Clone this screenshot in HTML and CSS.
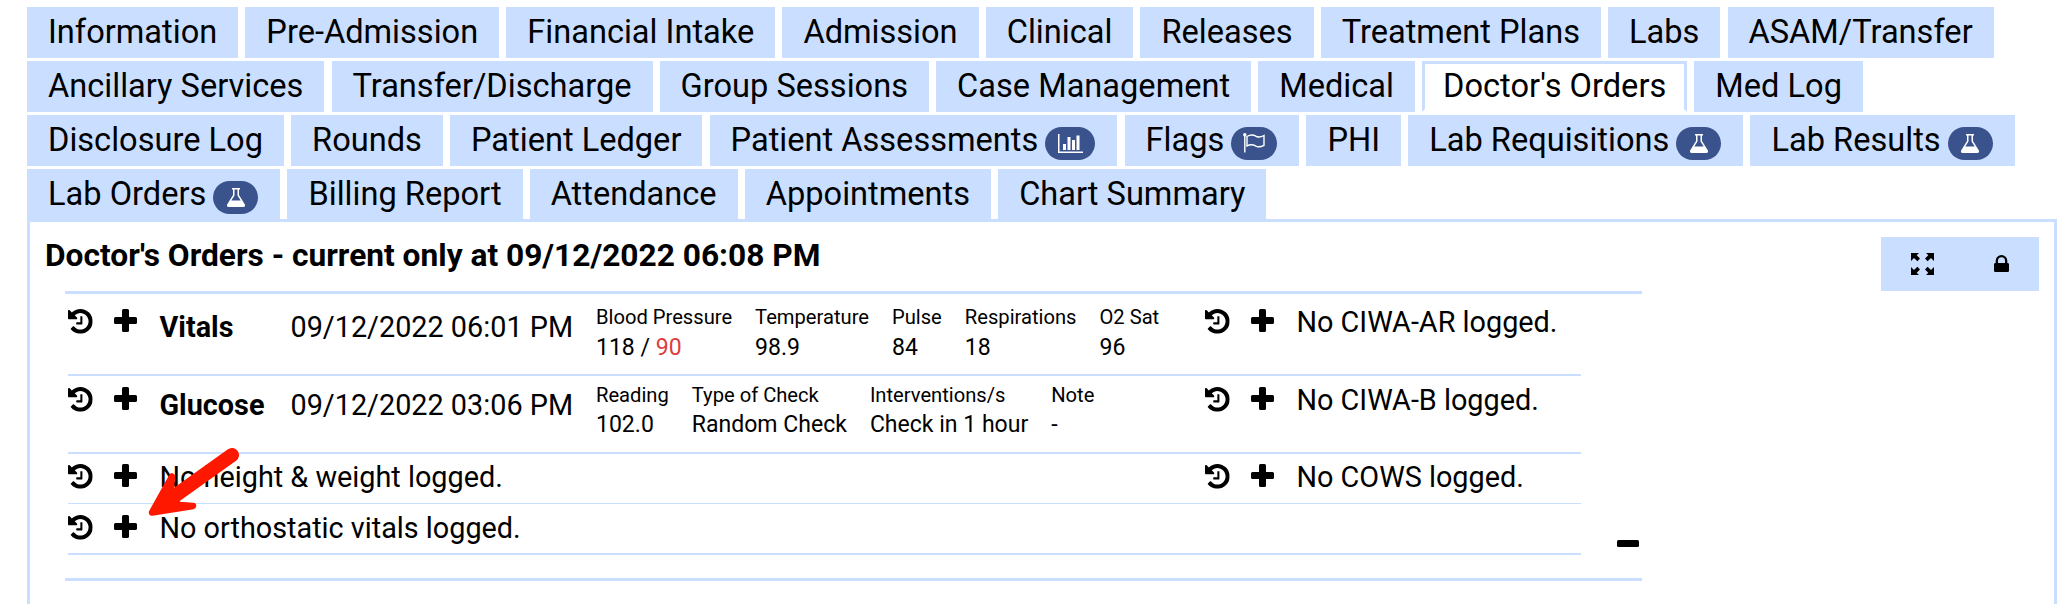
FILE: index.html
```html
<!DOCTYPE html>
<html lang="en">
<head>
<meta charset="utf-8">
<title>Doctor's Orders</title>
<link rel="stylesheet" href="styles.css">
</head>
<body>
<svg class="sprite" aria-hidden="true">
  <symbol id="history" viewBox="0 128 1536 1536"><path d="M1536 896q0 156-61 298t-164 245-245 164-298 61q-172 0-327-72.5t-264-204.5q-7-10-6.5-22.5t8.5-20.5l137-138q10-9 25-9 16 2 23 12 73 95 179 147t225 52q104 0 198.5-40.5t163.5-109.5 109.5-163.5 40.5-198.5-40.5-198.5-109.5-163.5-163.5-109.5-198.5-40.5q-98 0-188 35.5t-160 101.5l137 138q31 30 14 69-17 40-59 40h-448q-26 0-45-19t-19-45v-448q0-42 40-59 39-17 69 14l130 129q107-101 244.5-156.5t284.5-55.5q156 0 298 61t245 164 164 245 61 298zm-640-288v448q0 14-9 23t-23 9h-320q-14 0-23-9t-9-23v-64q0-14 9-23t23-9h224v-352q0-14 9-23t23-9h64q14 0 23 9t9 23z"/></symbol>
  <symbol id="plus" viewBox="0 0 23 23"><path d="M9.500 0h4q1.500 0 1.500 1.500V8h6.500Q23 8 23 9.500v4q0 1.500-1.500 1.500H15v6.500q0 1.500-1.500 1.500h-4Q8 23 8 21.500V15H1.500Q0 15 0 13.500v-4Q0 8 1.500 8H8V1.500Q8 0 9.500 0z"/></symbol>
  <symbol id="flask" viewBox="0 0 18 19"><path fill-rule="evenodd" d="M5 0h8v1.500h-1v5.500l5.600 9q1.400 3-1.400 3H1.800Q-1 19 .4 16L6 7V1.500H5zM7.500 1.500V7.400L4.300 12.500h9.400L10.500 7.400V1.500z"/></symbol>
  <symbol id="chart" viewBox="0 0 25 19"><path d="M0 0h1.500v17.500H25V19H0zM5 10h3v6H5zM9.500 3h3v13h-3zM14 6h3v10h-3zM18.500 1.500h3V16h-3z"/></symbol>
  <symbol id="flag" viewBox="0 0 22 20"><path d="M1.800 1v18.500M4 3.500c5-3 7.500-1 9.500 0 2.500 1 5 .3 7.500-1v9.800c-2.500 1.300-5 2-7.500 1-2-1-5-3-9.500-.3z" fill="none" stroke="currentColor" stroke-width="1.400"/><circle cx="1.800" cy="1.800" r="1.700"/></symbol>
  <symbol id="expand" viewBox="0 0 23 22"><path d="M0 0h8L5.700 2.300 9 5.600 6.400 8.300 3 5 0 8z"/><path d="M23 0h-8l2.300 2.300L14 5.600l2.600 2.700L20 5l3 3zM0 22h8l-2.300-2.300L9 16.400l-2.600-2.700L3 17l-3-3zM23 22h-8l2.300-2.300L14 16.400l2.600-2.700L20 17l3-3z"/></symbol>
  <symbol id="lock" viewBox="0 0 15 17"><path fill-rule="evenodd" d="M1.700 8V5.700a5.800 5.700 0 0 1 11.600 0V8Q15 8 15 9.200v6.500q0 1.300-1.300 1.300H1.300Q0 17 0 15.700V9.200Q0 8 1.700 8zM4 8h7V5.700a3.500 3.500 0 0 0-7 0z"/></symbol>
</svg>

<nav class="tabs">
  <a class="tab">Information</a>
  <a class="tab">Pre-Admission</a>
  <a class="tab">Financial Intake</a>
  <a class="tab">Admission</a>
  <a class="tab">Clinical</a>
  <a class="tab">Releases</a>
  <a class="tab">Treatment Plans</a>
  <a class="tab">Labs</a>
  <a class="tab">ASAM/Transfer</a>
  <a class="tab">Ancillary Services</a>
  <a class="tab">Transfer/Discharge</a>
  <a class="tab">Group Sessions</a>
  <a class="tab">Case Management</a>
  <a class="tab">Medical</a>
  <a class="tab tab-active">Doctor's Orders</a>
  <a class="tab">Med Log</a>
  <a class="tab">Disclosure Log</a>
  <a class="tab">Rounds</a>
  <a class="tab">Patient Ledger</a>
  <a class="tab">Patient Assessments <span class="pill pill-chart"><svg><use href="#chart"/></svg></span></a>
  <a class="tab">Flags <span class="pill pill-flag"><svg><use href="#flag"/></svg></span></a>
  <a class="tab">PHI</a>
  <a class="tab">Lab Requisitions <span class="pill"><svg><use href="#flask"/></svg></span></a>
  <a class="tab">Lab Results <span class="pill"><svg><use href="#flask"/></svg></span></a>
  <a class="tab">Lab Orders <span class="pill"><svg><use href="#flask"/></svg></span></a>
  <a class="tab">Billing Report</a>
  <a class="tab">Attendance</a>
  <a class="tab">Appointments</a>
  <a class="tab">Chart Summary</a>
</nav>

<main class="panel">
  <header class="panel-head">
    <h1 class="title">Doctor's Orders - current only at 09/12/2022 06:08 PM</h1>
    <div class="tools">
      <svg class="tool-expand"><use href="#expand"/></svg>
      <svg class="tool-lock"><use href="#lock"/></svg>
    </div>
  </header>
  <section class="orders">
    <div class="log">
      <div class="row row-tall">
        <svg class="history"><use href="#history"/></svg>
        <svg class="plus"><use href="#plus"/></svg>
        <b class="name">Vitals</b>
        <span class="date">09/12/2022 06:01 PM</span>
        <dl class="stats">
          <div><dt>Blood Pressure</dt><dd>118 / <span class="alert">90</span></dd></div>
          <div><dt>Temperature</dt><dd>98.9</dd></div>
          <div><dt>Pulse</dt><dd>84</dd></div>
          <div><dt>Respirations</dt><dd>18</dd></div>
          <div><dt>O2 Sat</dt><dd>96</dd></div>
        </dl>
        <div class="side">
          <svg class="history"><use href="#history"/></svg>
          <svg class="plus"><use href="#plus"/></svg>
          <span class="none">No CIWA-AR logged.</span>
        </div>
      </div>
      <div class="row row-mid">
        <svg class="history"><use href="#history"/></svg>
        <svg class="plus"><use href="#plus"/></svg>
        <b class="name">Glucose</b>
        <span class="date">09/12/2022 03:06 PM</span>
        <dl class="stats">
          <div><dt>Reading</dt><dd>102.0</dd></div>
          <div><dt>Type of Check</dt><dd>Random Check</dd></div>
          <div><dt>Interventions/s</dt><dd>Check in 1 hour</dd></div>
          <div><dt>Note</dt><dd>-</dd></div>
        </dl>
        <div class="side">
          <svg class="history"><use href="#history"/></svg>
          <svg class="plus"><use href="#plus"/></svg>
          <span class="none">No CIWA-B logged.</span>
        </div>
      </div>
      <div class="row row-thin">
        <svg class="history"><use href="#history"/></svg>
        <svg class="plus"><use href="#plus"/></svg>
        <span class="none">No height &amp; weight logged.</span>
        <div class="side">
          <svg class="history"><use href="#history"/></svg>
          <svg class="plus"><use href="#plus"/></svg>
          <span class="none">No COWS logged.</span>
        </div>
      </div>
      <div class="row row-last">
        <svg class="history"><use href="#history"/></svg>
        <svg class="plus"><use href="#plus"/></svg>
        <span class="none">No orthostatic vitals logged.</span>
      </div>
      <svg class="pointer" viewBox="0 0 92 70"><path d="M84 7L28 47" stroke-width="14"/><path class="pointer-head" d="M4 64.500L24 28.500L22 49L31 57L45 58Z" stroke-width="6.500"/></svg>
    </div>
    <span class="collapse"></span>
  </section>
</main>
</body>
</html>
```

FILE: styles.css
```css
* { box-sizing: border-box; }
body { margin: 0; height: 604px; overflow: hidden; background: #fff; color: #000; font-family: Roboto, sans-serif; font-size: 28.8px; }
svg { display: block; fill: currentColor; flex: none; }
.sprite { display: none; }

.tabs { display: flex; flex-wrap: wrap; gap: 3px 7.1px; width: 2030px; margin-left: 27px; padding-top: 7px; }
.tab { display: flex; align-items: center; height: 51px; padding: 0 18px; border: 3px solid #cadeff; background: #cadeff; font-size: 32.6px; line-height: 45px; white-space: pre; }
.tab-active { background: #fff; border-bottom-color: #fff; }
.pill { display: flex; align-items: center; justify-content: center; width: 45px; height: 33px; margin: 5px 0 0 -1px; border-radius: 17px; background: #3b538c; color: #fff; }
.pill svg { width: 18px; height: 19px; }
.tab:has(.pill) { padding-right: 19px; }
.pill-chart { width: 50px; }
.pill-chart svg { width: 25px; }
.pill-flag { width: 46px; }
.pill-flag svg { width: 22px; height: 20px; }

.panel { width: 2030px; height: 400px; margin: -1px 0 0 27px; border: 3px solid #cadeff; }
.panel-head { display: flex; justify-content: space-between; height: 69px; padding: 15px 15px 0 15px; }
.title { margin: 0; font-size: 31.68px; line-height: 38px; font-weight: 700; }
.tools { display: flex; align-items: center; width: 158px; height: 54px; padding-left: 30px; gap: 60px; background: #cadeff; }
.tool-expand { width: 23px; height: 22px; }
.tool-lock { width: 15px; height: 17px; margin-top: -2px; }

.orders { position: relative; width: 1577px; height: 290px; margin-left: 35px; padding: 0 61px 0 3px; border: solid #cadeff; border-width: 3px 0; }
.log { position: relative; }
.row { display: flex; align-items: flex-start; border-bottom: 2px solid #cadeff; line-height: 33px; white-space: nowrap; }
.row-tall { height: 82px; padding-top: 15px; }
.row-mid { height: 78px; padding-top: 11px; }
.row-thin { height: 50px; padding-top: 10px; border-bottom-width: 1px; }
.row-last { height: 51px; padding-top: 11px; }
.history { width: 24.7px; height: 24.7px; margin-right: 21.3px; }
.plus { width: 23px; height: 23px; margin-right: 22.5px; }
.none { margin-top: -3px; }
.name { width: 131px; margin-top: 2px; }
.date { width: 305.5px; margin-top: 2px; }
.stats { display: flex; gap: 23px; margin: 0; }
.stats dt { font-size: 20.16px; line-height: 24px; margin-top: -4px; }
.stats dd { margin: 5px 0 0; font-size: 23.04px; line-height: 28px; }
.row-mid .stats dd { margin-top: 4px; }
.alert { color: #dc3d40; }
.side { display: flex; width: 376px; margin-left: auto; }
.collapse { position: absolute; left: 1552px; top: 246px; width: 22px; height: 7px; border-radius: 1.5px; background: #000; }
.pointer { position: absolute; left: 80px; top: 154px; width: 92px; height: 70px; stroke: #ff1800; stroke-linecap: round; stroke-linejoin: round; }
.pointer-head { fill: #ff1800; }
```
